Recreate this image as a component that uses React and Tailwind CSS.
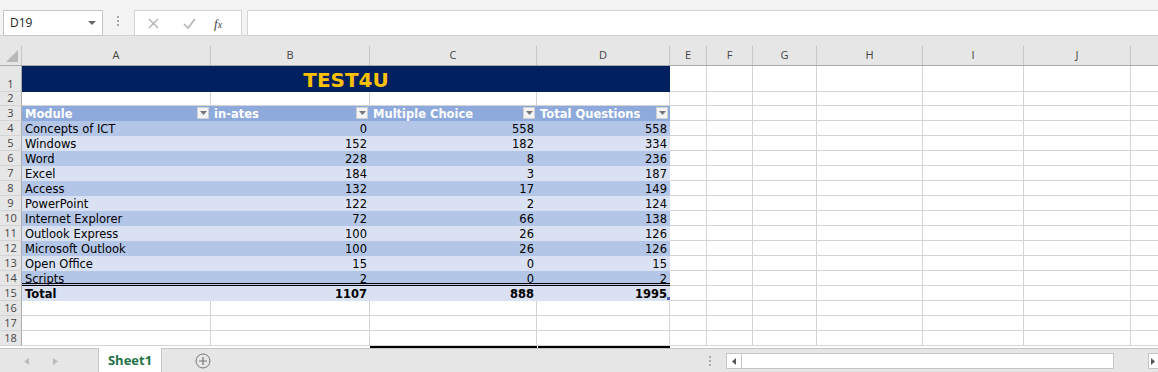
import React from "react";

const cols = [
  { k: "A", w: "w-[189px]" },
  { k: "B", w: "w-[159px]" },
  { k: "C", w: "w-[167px]" },
  { k: "D", w: "w-[133px]" },
  { k: "E", w: "w-[37px]" },
  { k: "F", w: "w-[46px]" },
  { k: "G", w: "w-[64px]" },
  { k: "H", w: "w-[106px]" },
  { k: "I", w: "w-[101px]" },
  { k: "J", w: "w-[107px]" },
  { k: "", w: "w-[40px]" },
];

const rest = cols.slice(4);
const tableW = ["w-[189px]", "w-[159px]", "w-[167px]", "w-[133px]"];

const data = [
  ["Concepts of ICT", 0, 558, 558],
  ["Windows", 152, 182, 334],
  ["Word", 228, 8, 236],
  ["Excel", 184, 3, 187],
  ["Access", 132, 17, 149],
  ["PowerPoint", 122, 2, 124],
  ["Internet Explorer", 72, 66, 138],
  ["Outlook Express", 100, 26, 126],
  ["Microsoft Outlook", 100, 26, 126],
  ["Open Office", 15, 0, 15],
  ["Scripts", 2, 0, 2],
];

const RowHead = ({ n, h = "h-[15px]" }) => (
  <div className={`w-[22px] shrink-0 ${h} bg-[#e6e6e6] border-r border-r-[#ababab] border-b border-b-[#d4d4d4] flex items-end justify-center text-[11px] leading-[14px] text-[#444] font-['Open_Sans',sans-serif]`}>
    {n}
  </div>
);

const EmptyCells = ({ list }) =>
  list.map((c, i) => (
    <div key={i} className={`${c.w} shrink-0 h-full border-r border-b border-[#d4d4d4]`} />
  ));

const Drop = () => (
  <div className="absolute right-[2px] top-[1px] w-[12px] h-[12px] bg-[#f4f4f4] border border-[#d0d0d0] flex items-center justify-center">
    <svg width="7" height="4" viewBox="0 0 7 4">
      <path d="M0 0h7L3.5 4z" fill="#777" />
    </svg>
  </div>
);

const TableRow = ({ n, bg, cells, bold, underline }) => (
  <div className="flex h-[15px]">
    <RowHead n={n} />
    <div className={`flex shrink-0 relative ${bg} h-full`}>
      {cells.map((v, i) => (
        <div
          key={i}
          className={`${tableW[i]} shrink-0 px-[3px] flex items-end ${i > 0 ? "justify-end" : ""} leading-[13px] ${bold ? "font-bold" : ""}`}
        >
          {v}
        </div>
      ))}
      {underline && (
        <div className="absolute left-0 right-0 bottom-0 h-[3px] border-y border-black" />
      )}
    </div>
    <div className="flex shrink-0 h-full">
      <EmptyCells list={rest} />
    </div>
  </div>
);

const PlainRow = ({ n, h = "h-[15px]" }) => (
  <div className={`flex ${h}`}>
    <RowHead n={n} h={h} />
    <div className="flex shrink-0 h-full">
      <EmptyCells list={cols} />
    </div>
  </div>
);

export default function App() {
  return (
    <div className="w-[1158px] h-[372px] overflow-hidden bg-white relative font-['DejaVu_Sans',Verdana,sans-serif] text-[11.5px] text-black">
      {/* formula bar */}
      <div className="h-[36px] bg-[#f3f3f3] border-b border-[#d4d4d4] relative">
        <div className="absolute left-[3px] top-[10px] w-[100px] h-[26px] bg-white border border-[#c6c6c6] flex items-center px-[6px] justify-between font-['Open_Sans',sans-serif] text-[12px] text-[#222]">
          <span>D19</span>
          <svg width="8" height="4" viewBox="0 0 8 4">
            <path d="M0 0h8L4 4z" fill="#666" />
          </svg>
        </div>
        <div className="absolute left-[117px] top-[16px] flex flex-col gap-[2px]">
          <span className="w-[2px] h-[2px] bg-[#aaa]" />
          <span className="w-[2px] h-[2px] bg-[#aaa]" />
          <span className="w-[2px] h-[2px] bg-[#aaa]" />
        </div>
        <div className="absolute left-[134px] top-[10px] w-[108px] h-[26px] bg-white border border-[#d4d4d4] flex items-center">
          <svg className="ml-[13px]" width="11" height="11" viewBox="0 0 11 11">
            <path d="M1 1l9 9M10 1l-9 9" stroke="#b3b3b3" strokeWidth="1.4" />
          </svg>
          <svg className="ml-[24px]" width="13" height="11" viewBox="0 0 13 11">
            <path d="M1 6l4 4 7-9" stroke="#b3b3b3" strokeWidth="1.6" fill="none" />
          </svg>
          <span className="ml-[18px] font-['Liberation_Serif',serif] italic text-[13px] text-[#444] leading-none">
            f<span className="text-[10px]">x</span>
          </span>
        </div>
        <div className="absolute left-[247px] top-[10px] right-[-2px] h-[26px] bg-white border border-[#d4d4d4]" />
      </div>

      {/* column headers */}
      <div className="h-[10px] bg-[#e6e6e6]" />
      <div className="flex h-[20px] bg-[#e6e6e6] border-b border-[#ababab] font-['Open_Sans',sans-serif] text-[11px] text-[#444]">
        <div className="w-[22px] shrink-0 h-full border-r border-[#c6c6c6] relative">
          <svg className="absolute right-[3px] bottom-[3px]" width="12" height="12" viewBox="0 0 12 12">
            <path d="M12 0V12H0z" fill="#b8b8b8" />
          </svg>
        </div>
        {cols.map((c) => (
          <div key={c.k + c.w} className={`${c.w} shrink-0 h-full border-r border-[#c6c6c6] flex items-center justify-center`}>
            {c.k}
          </div>
        ))}
      </div>

      {/* row 1 */}
      <div className="flex h-[26px]">
        <RowHead n="1" h="h-[26px]" />
        <div className="w-[648px] shrink-0 h-full bg-[#002060] flex items-center justify-center font-bold text-[20px] text-[#ffc000] leading-none pt-[1px]">
          TEST4U
        </div>
        <div className="flex shrink-0 h-full">
          <EmptyCells list={rest} />
        </div>
      </div>
      <PlainRow n="2" h="h-[14px]" />

      {/* header row 3 */}
      <div className="flex h-[15px]">
        <RowHead n="3" />
        <div className="flex shrink-0 bg-[#8ea9db] h-full text-white font-bold">
          {["Module", "in-ates", "Multiple Choice", "Total Questions"].map((t, i) => (
            <div key={t} className={`${tableW[i]} shrink-0 relative px-[3px] flex items-end leading-[13px]`}>
              {t}
              <Drop />
            </div>
          ))}
        </div>
        <div className="flex shrink-0 h-full">
          <EmptyCells list={rest} />
        </div>
      </div>

      {data.map((r, i) => (
        <TableRow
          key={i}
          n={i + 4}
          bg={i % 2 === 0 ? "bg-[#b4c6e7]" : "bg-[#d9e1f2]"}
          cells={r}
          underline={i === data.length - 1}
        />
      ))}
      <div className="relative">
        <TableRow n="15" bg="bg-[#d9e1f2]" cells={["Total", 1107, 888, 1995]} bold />
        <span className="absolute left-[667px] top-[11px] w-[3px] h-[3px] bg-[#4a5bb0]" />
      </div>
      <PlainRow n="16" />
      <PlainRow n="17" />
      <PlainRow n="18" />
      <div className="flex h-[2px]">
        <div className="w-[370px] shrink-0" />
        <div className="w-[167px] shrink-0 h-full bg-black" />
        <div className="w-[1px] shrink-0 h-full bg-white" />
        <div className="w-[132px] shrink-0 h-full bg-black" />
      </div>

      {/* sheet tabs */}
      <div className="h-[24px] bg-[#e6e6e6] border-t border-[#c6c6c6] relative font-['Open_Sans',sans-serif]">
        <svg className="absolute left-[24px] top-[9px]" width="5" height="7" viewBox="0 0 5 7">
          <path d="M5 0v7L0 3.5z" fill="#bcbcbc" />
        </svg>
        <svg className="absolute left-[53px] top-[9px]" width="5" height="7" viewBox="0 0 5 7">
          <path d="M0 0v7L5 3.5z" fill="#bcbcbc" />
        </svg>
        <div className="absolute left-[98px] top-[-1px] w-[64px] h-[25px] bg-white border-x border-[#c6c6c6] flex items-center justify-center font-bold text-[13px] text-[#217346]">
          Sheet1
        </div>
        <svg className="absolute left-[195px] top-[4px]" width="16" height="16" viewBox="0 0 16 16">
          <circle cx="8" cy="8" r="7" stroke="#777" strokeWidth="1" fill="none" />
          <path d="M8 4v8M4 8h8" stroke="#777" strokeWidth="1.2" />
        </svg>
        <div className="absolute left-[709px] top-[7px] flex flex-col gap-[2px]">
          <span className="w-[2px] h-[2px] bg-[#aaa]" />
          <span className="w-[2px] h-[2px] bg-[#aaa]" />
          <span className="w-[2px] h-[2px] bg-[#aaa]" />
        </div>
        <div className="absolute left-[726px] top-[4px] w-[388px] h-[16px] bg-white border border-[#c6c6c6] flex">
          <div className="w-[15px] h-full border-r border-[#c6c6c6] flex items-center justify-center">
            <svg width="4" height="7" viewBox="0 0 4 7">
              <path d="M4 0v7L0 3.5z" fill="#555" />
            </svg>
          </div>
        </div>
        <div className="absolute left-[1148px] top-[4px] w-[15px] h-[16px] bg-white border border-[#c6c6c6] flex items-center pl-[2px]">
          <svg width="4" height="7" viewBox="0 0 4 7">
            <path d="M0 0v7L4 3.5z" fill="#555" />
          </svg>
        </div>
      </div>
    </div>
  );
}
